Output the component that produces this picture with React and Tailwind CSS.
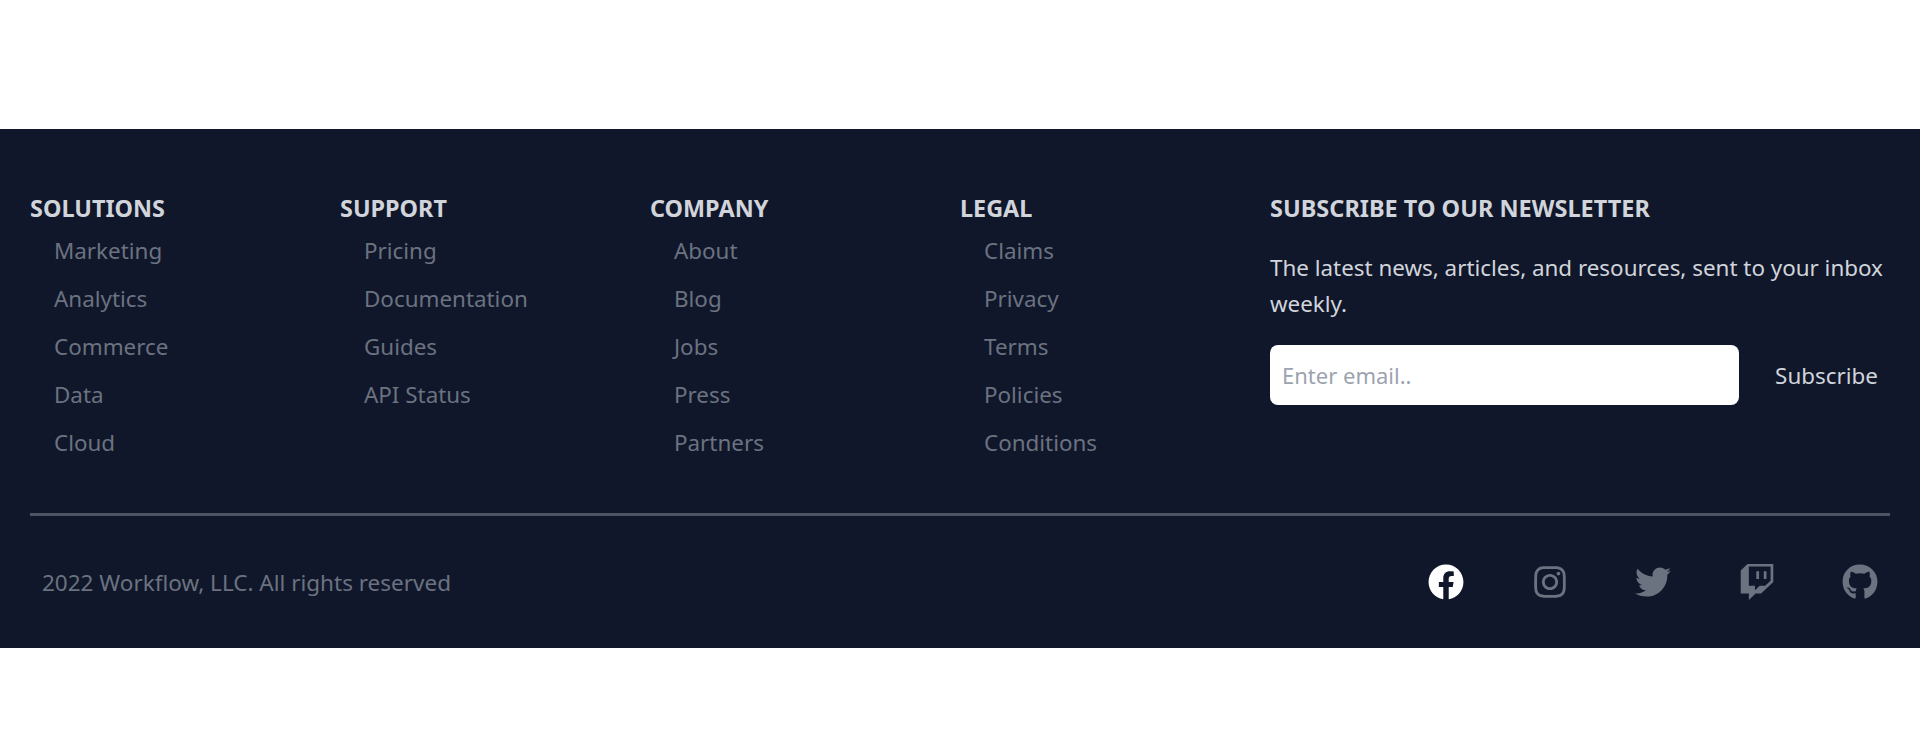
import React from "react";
import { FaFacebook, FaInstagram, FaTwitter, FaTwitch, FaGithub } from "react-icons/fa";

const columns = [
  { title: "SOLUTIONS", links: ["Marketing", "Analytics", "Commerce", "Data", "Cloud"] },
  { title: "SUPPORT", links: ["Pricing", "Documentation", "Guides", "API Status"] },
  { title: "COMPANY", links: ["About", "Blog", "Jobs", "Press", "Partners"] },
  { title: "LEGAL", links: ["Claims", "Privacy", "Terms", "Policies", "Conditions"] },
];

export default function App() {
  return (
    <div className="bg-white pt-[129px] pb-[103px] font-['Noto_Sans',sans-serif]">
      <footer className="bg-[#10172a] px-[30px] pt-[61px]">
        <div className="grid grid-cols-6 border-b-[3px] border-[#4b5563] pb-[46px]">
          {columns.map((col) => (
            <div key={col.title}>
              <h6 className="text-[23.4px] leading-[37px] font-bold text-[#d1d5db]">{col.title}</h6>
              <ul>
                {col.links.map((link) => (
                  <li key={link} className="py-[6px] pl-6 text-[22.4px] leading-[36px] text-[#6b7280]">
                    {link}
                  </li>
                ))}
              </ul>
            </div>
          ))}
          <div className="col-span-2">
            <h6 className="text-[23.5px] leading-[36px] font-bold text-[#d1d5db]">SUBSCRIBE TO OUR NEWSLETTER</h6>
            <p className="mt-6 text-[22.4px] leading-[36px] text-[#d1d5db]">
              The latest news, articles, and resources, sent to your inbox weekly.
            </p>
            <form className="mt-[23px] flex">
              <input
                className="h-[60px] flex-1 rounded-lg bg-white px-3 text-[22px] text-black outline-none placeholder:text-[#9ca3af]"
                type="text"
                placeholder="Enter email.."
              />
              <button type="button" className="ml-6 w-[127px] pt-0.5 text-[22.4px] text-[#d1d5db]">
                Subscribe
              </button>
            </form>
          </div>
        </div>
        <div className="flex items-center justify-between px-3 py-[48px]">
          <p className="translate-y-[1px] text-[22.5px] leading-[36px] text-[#6b7280]">2022 Workflow, LLC. All rights reserved</p>
          <div className="flex w-[450px] items-center justify-between text-[36px] text-[#6b7280]">
            <FaFacebook className="text-white" />
            <FaInstagram />
            <FaTwitter />
            <FaTwitch />
            <FaGithub />
          </div>
        </div>
      </footer>
    </div>
  );
}
